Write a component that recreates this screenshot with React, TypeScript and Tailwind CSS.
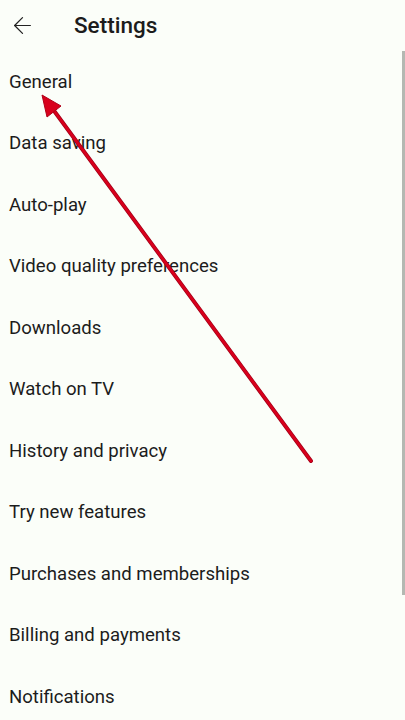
import { ArrowLeft } from 'lucide-react';

const items = [
  'General',
  'Data saving',
  'Auto-play',
  'Video quality preferences',
  'Downloads',
  'Watch on TV',
  'History and privacy',
  'Try new features',
  'Purchases and memberships',
  'Billing and payments',
  'Notifications',
];

export default function App() {
  return (
    <div
      className="relative h-[720px] w-[405px] overflow-hidden bg-[#fbfef9] text-[#1c1c1c]"
      style={{ fontFamily: 'Roboto, "Noto Sans", sans-serif' }}
    >
      <header className="flex h-[51px] items-center">
        <div className="flex w-[74px] items-center pl-[9px]">
          <ArrowLeft className="h-[27px] w-[27px] text-[#222]" strokeWidth={1.1} />
        </div>
        <h1 className="text-[22.5px] font-medium">Settings</h1>
      </header>

      <ul className="flex flex-col pt-[1px]">
        {items.map((label) => (
          <li key={label} className="flex h-[61.5px] items-center pl-[9px] text-[18.6px]">
            {label}
          </li>
        ))}
      </ul>

      {/* scrollbar */}
      <div className="absolute right-0 top-[51px] h-[544px] w-[3px] bg-[#b4b8b2]" />

      {/* annotation arrow */}
      <svg className="pointer-events-none absolute left-0 top-0" width="405" height="720">
        <line x1="311" y1="461" x2="52" y2="108" stroke="#a00018" strokeWidth="4" strokeLinecap="round" />
        <line x1="311" y1="461" x2="52" y2="108" stroke="#d8001c" strokeWidth="2.6" strokeLinecap="round" />
        <polygon points="42,95 61,106 47,117" fill="#d8001c" stroke="#b00018" strokeWidth="1" />
      </svg>
    </div>
  );
}
